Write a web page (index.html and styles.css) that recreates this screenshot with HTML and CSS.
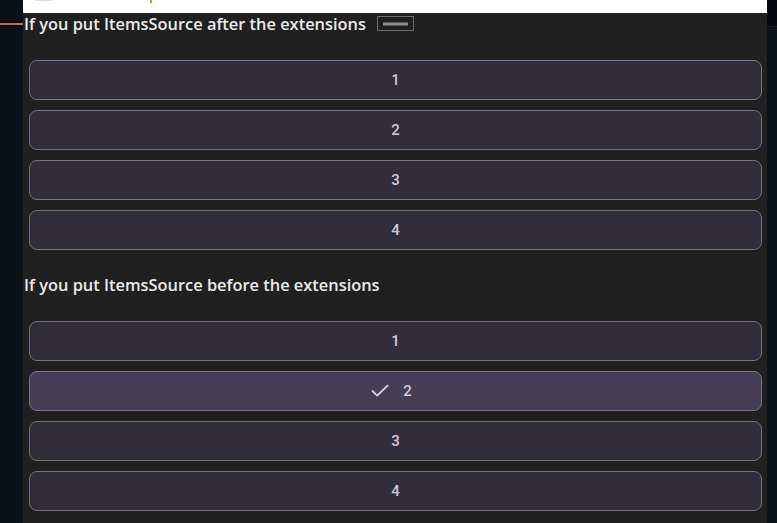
FILE: index.html
```html
<!DOCTYPE html>
<html>
<head>
<meta charset="utf-8">
<link rel="stylesheet" href="styles.css">
</head>
<body>
<div class="app">
  <div class="side-left">
    <div class="marker"></div>
  </div>
  <div class="main">
    <div class="topbar">
      <span class="tb-gray"></span>
      <span class="tb-orange"></span>
    </div>
    <div class="heading heading-first">
      <span>If you put ItemsSource after the extensions</span>
      <span class="mini-btn"><span class="mini-lines"></span></span>
    </div>
    <div class="group">
      <div class="seg">1</div>
      <div class="seg">2</div>
      <div class="seg">3</div>
      <div class="seg">4</div>
    </div>
    <div class="heading heading-second">
      <span>If you put ItemsSource before the extensions</span>
    </div>
    <div class="group">
      <div class="seg">1</div>
      <div class="seg selected">
        <svg class="check" width="18" height="14" viewBox="0 0 18 14"><path d="M1.5 7 L6.2 11.6 L16.5 1.6" fill="none" stroke="#d3cedb" stroke-width="1.9" stroke-linecap="round" stroke-linejoin="round"/></svg>
        <span>2</span>
      </div>
      <div class="seg">3</div>
      <div class="seg">4</div>
    </div>
  </div>
  <div class="side-right">
    <div class="sr-top"></div>
  </div>
</div>
</body>
</html>
```
FILE: styles.css
```css
html, body {
  margin: 0;
  padding: 0;
  background: #202020;
}
.app {
  display: flex;
  width: 777px;
  height: 523px;
  overflow: hidden;
}
.side-left {
  width: 23px;
  flex: none;
  background: #0b0f17;
  padding-top: 23px;
  box-sizing: border-box;
}
.marker {
  height: 2px;
  background: #c9664f;
}
.main {
  flex: 1;
  background: #202020;
  display: flex;
  flex-direction: column;
}
.side-right {
  width: 10px;
  flex: none;
  background: #0d1118;
}
.sr-top {
  height: 26px;
  background: #05080d;
  border-bottom: 1px solid #1a1e26;
}
.topbar {
  height: 13px;
  background: #ffffff;
  flex: none;
  display: flex;
  align-items: flex-start;
}
.tb-gray {
  width: 17px;
  height: 1px;
  margin-left: 12px;
  background: #dcdcdc;
}
.tb-orange {
  width: 2px;
  height: 3px;
  margin-left: 98px;
  background: #e08a2a;
}
.heading {
  display: flex;
  align-items: center;
  font-family: "Open Sans", "Noto Sans", sans-serif;
  font-weight: 600;
  font-size: 16.4px;
  color: #ebebeb;
  padding-left: 1px;
}
.heading-first {
  height: 21px;
  margin-bottom: 26px;
}
.heading-second {
  height: 24px;
  margin-top: 22px;
  margin-bottom: 25px;
}
.mini-btn {
  width: 37px;
  height: 15px;
  box-sizing: border-box;
  border: 1px solid #6b6b6b;
  margin-left: 11px;
  display: flex;
  align-items: center;
  justify-content: center;
}
.mini-lines {
  width: 25px;
  height: 2px;
  background: #8a8a8a;
  border-top: 1px solid #5a5a5a;
  border-bottom: 1px solid #5a5a5a;
}
.group {
  display: flex;
  flex-direction: column;
  gap: 10px;
  padding: 0 5px 0 6px;
}
.seg {
  height: 40px;
  box-sizing: border-box;
  border: 1px solid #76737c;
  border-radius: 8px;
  background: #312d3a;
  display: flex;
  align-items: center;
  justify-content: center;
  gap: 14px;
  font-family: Roboto, "Noto Sans", sans-serif;
  font-weight: 500;
  font-size: 15px;
  color: #d0cbd6;
}
.seg.selected {
  background: #463d57;
  border-color: #7b7685;
  padding-right: 8px;
}
.check {
  display: block;
}
```
